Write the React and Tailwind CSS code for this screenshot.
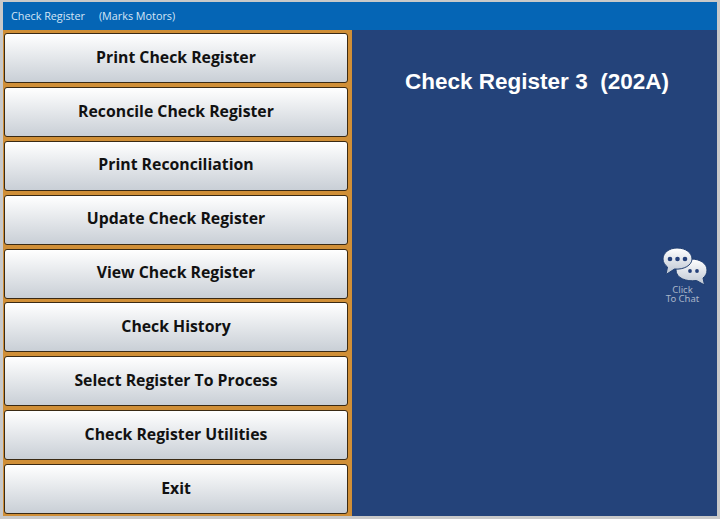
const buttons = [
  'Print Check Register',
  'Reconcile Check Register',
  'Print Reconciliation',
  'Update Check Register',
  'View Check Register',
  'Check History',
  'Select Register To Process',
  'Check Register Utilities',
  'Exit',
];

function ChatIcon() {
  return (
    <svg width="46" height="40" viewBox="0 0 46 40">
      <defs>
        <linearGradient id="bubble" x1="0" y1="0" x2="0" y2="1">
          <stop offset="0" stopColor="#ffffff" />
          <stop offset="1" stopColor="#bcc5d2" />
        </linearGradient>
      </defs>
      <path d="M29 12c9 0 16 4.500 16 11 0 3.500-1.500 6-4 8l1.500 7-8-4.500C24 35 14 31 14 23c0-6 7-11 15-11z" fill="url(#bubble)" stroke="#1f3d70" strokeWidth="1" />
      <circle cx="28" cy="24" r="1.900" fill="#24407a" />
      <circle cx="35" cy="24" r="1.900" fill="#24407a" />
      <path d="M15 1C7 1 1 6 1 12c0 3.500 2 6 4.500 8L4 27.500l8.500-5.500C22 23 30 18 30 12 30 6 24 1 15 1z" fill="url(#bubble)" stroke="#1f3d70" strokeWidth="1" />
      <circle cx="8" cy="12" r="2.300" fill="#24407a" />
      <circle cx="15.500" cy="12" r="2.300" fill="#24407a" />
      <circle cx="23" cy="12" r="2.300" fill="#24407a" />
    </svg>
  );
}

export default function App() {
  return (
    <div className="w-[720px] h-[519px] bg-[#c9c9c9] pt-[2px] pl-[3px] pr-[3px] pb-[3px] overflow-hidden font-['Open_Sans','Noto_Sans',sans-serif]">
      <div className="h-full flex flex-col">
        <div className="h-[28px] shrink-0 bg-[#0565b5] flex items-center pl-[8px] gap-[14px] text-[10.800px] text-[#d5e6f5]">
          <span>Check Register</span>
          <span>(Marks Motors)</span>
        </div>
        <div className="flex-1 flex min-h-0">
          <div className="w-[349px] shrink-0 bg-[#d08f37] pl-[1px] pr-[4px] pt-[3px] pb-[2px] flex flex-col justify-between">
            {buttons.map((label) => (
              <button
                key={label}
                className="h-[50px] w-full pb-[1px] rounded-[3px] border border-[#3a2a14] bg-gradient-to-b from-[#ffffff] to-[#c9cfd6] text-[15.800px] font-bold text-[#111111] font-['Open_Sans',sans-serif]"
              >
                {label}
              </button>
            ))}
          </div>
          <div className="flex-1 bg-[#24437a] flex flex-col relative">
            <h1 className="mt-[35px] pl-[5px] text-center text-[22.500px] font-bold text-white font-['Liberation_Sans',sans-serif] whitespace-pre">
              Check Register 3  (202A)
            </h1>
            <div className="absolute left-[310px] top-[217px] w-[46px] flex flex-col items-center">
              <ChatIcon />
              <span className="-ml-[5px] -mt-[2px] text-[9.500px] leading-[9px] text-center text-[#aab6c9] font-['Noto_Sans',sans-serif]">
                Click<br />To Chat
              </span>
            </div>
          </div>
        </div>
      </div>
    </div>
  );
}
